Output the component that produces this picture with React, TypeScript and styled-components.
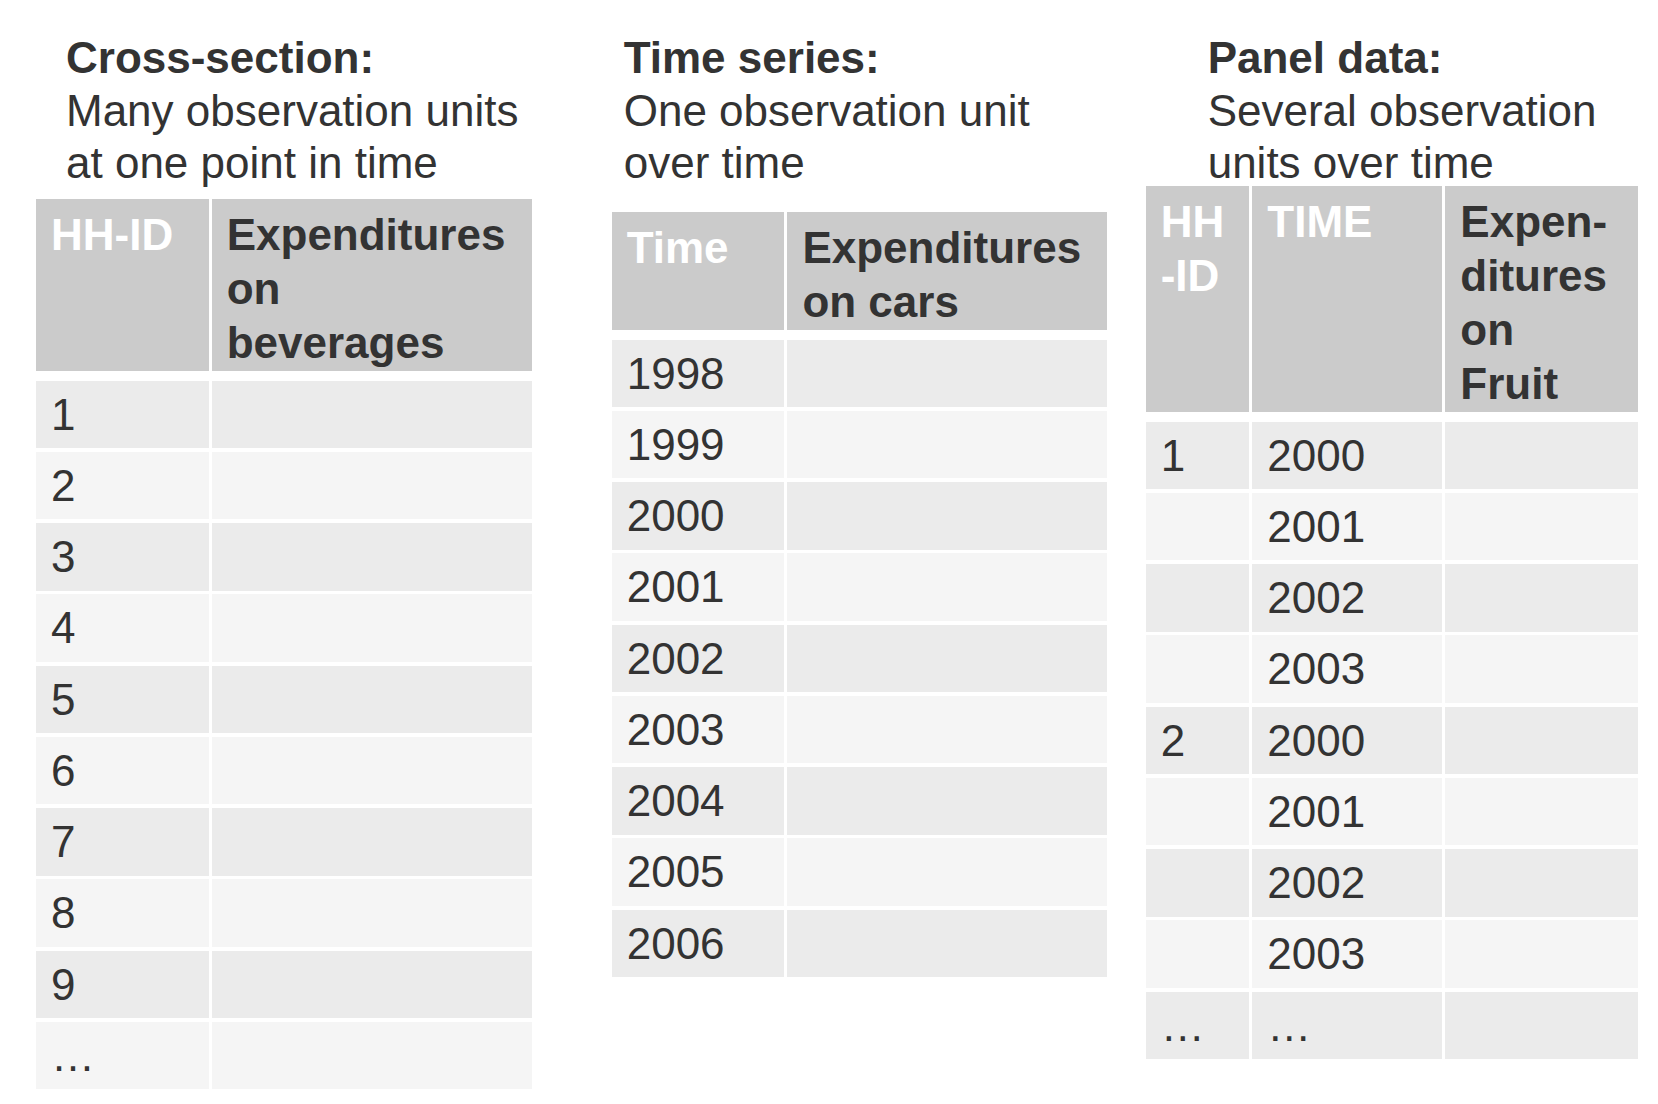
import styled, { createGlobalStyle } from "styled-components";

const GlobalStyle = createGlobalStyle`
  html, body {
    margin: 0;
    padding: 0;
    background: #ffffff;
  }

  body {
    font-family: "Liberation Sans", Arial, Helvetica, sans-serif;
    color: #333333;
  }
`;

const Page = styled.main`
  display: flex;
  align-items: flex-start;
  width: 1658px;
  min-height: 1104px;
  padding-top: 32px;
  box-sizing: border-box;
`;

const Column = styled.section<{ $offset: number }>`
  display: flex;
  flex-direction: column;
  margin-left: ${(p) => p.$offset}px;
`;

const Title = styled.h2<{ $indent: number }>`
  margin: 0;
  padding-left: ${(p) => p.$indent}px;
  font-size: 44px;
  line-height: 52.5px;
  font-weight: 400;
  color: #333333;
  white-space: nowrap;
`;

const TitleLead = styled.strong`
  font-weight: 700;
`;

const Table = styled.div<{ $gap: number }>`
  display: flex;
  flex-direction: column;
  gap: 3.75px;
  margin-top: ${(p) => p.$gap}px;
`;

const Row = styled.div<{ $cols: string }>`
  display: grid;
  grid-template-columns: ${(p) => p.$cols};
  column-gap: 3px;
`;

const HeaderRow = styled(Row)`
  margin-bottom: 6.25px;
`;

const HeaderCell = styled.div<{ $light?: boolean }>`
  background: #cbcbcb;
  padding: 9px 6px 1px 15px;
  font-size: 44px;
  line-height: 54px;
  font-weight: 700;
  color: ${(p) => (p.$light ? "#ffffff" : "#333333")};
  white-space: nowrap;
`;

const Cell = styled.div<{ $shade: boolean }>`
  height: 67.5px;
  padding-left: 15px;
  background: ${(p) => (p.$shade ? "#ebebeb" : "#f5f5f5")};
  font-size: 44px;
  line-height: 67.5px;
  color: #333333;
  white-space: nowrap;
`;

type Header = { lines: string[]; light?: boolean };

type Panel = {
  lead: string;
  lines: string[];
  offset: number;
  indent: number;
  gap: number;
  cols: string;
  headers: Header[];
  rows: string[][];
};

const years = ["2000", "2001", "2002", "2003"];

const panels: Panel[] = [
  {
    lead: "Cross-section:",
    lines: ["Many observation units", "at one point in time"],
    offset: 36,
    indent: 30,
    gap: 9,
    cols: "172.7px 320px",
    headers: [
      { lines: ["HH-ID"], light: true },
      { lines: ["Expenditures", "on", "beverages"] },
    ],
    rows: ["1", "2", "3", "4", "5", "6", "7", "8", "9", "…"].map((id) => [id, ""]),
  },
  {
    lead: "Time series:",
    lines: ["One observation unit", "over time"],
    offset: 80,
    indent: 12,
    gap: 22,
    cols: "172.7px 320px",
    headers: [
      { lines: ["Time"], light: true },
      { lines: ["Expenditures", "on cars"] },
    ],
    rows: ["1998", "1999", "2000", "2001", "2002", "2003", "2004", "2005", "2006"].map(
      (y) => [y, ""]
    ),
  },
  {
    lead: "Panel data:",
    lines: ["Several observation", "units over time"],
    offset: 38.3,
    indent: 62,
    gap: -4,
    cols: "103.7px 190px 193px",
    headers: [
      { lines: ["HH", "-ID"], light: true },
      { lines: ["TIME"], light: true },
      { lines: ["Expen-", "ditures", "on", "Fruit"] },
    ],
    rows: [
      ...years.map((y, i) => [i === 0 ? "1" : "", y, ""]),
      ...years.map((y, i) => [i === 0 ? "2" : "", y, ""]),
      ["…", "…", ""],
    ],
  },
];

const Lines = ({ lines }: { lines: string[] }) => (
  <>
    {lines.map((line, i) => (
      <span key={i}>
        {i > 0 && <br />}
        {line}
      </span>
    ))}
  </>
);

export default function App() {
  return (
    <>
      <GlobalStyle />
      <Page>
        {panels.map((panel) => (
          <Column key={panel.lead} $offset={panel.offset}>
            <Title $indent={panel.indent}>
              <TitleLead>{panel.lead}</TitleLead>
              <br />
              <Lines lines={panel.lines} />
            </Title>
            <Table $gap={panel.gap}>
              <HeaderRow $cols={panel.cols}>
                {panel.headers.map((h, i) => (
                  <HeaderCell key={i} $light={h.light}>
                    <Lines lines={h.lines} />
                  </HeaderCell>
                ))}
              </HeaderRow>
              {panel.rows.map((row, r) => (
                <Row key={r} $cols={panel.cols}>
                  {row.map((value, c) => (
                    <Cell key={c} $shade={r % 2 === 0}>
                      {value}
                    </Cell>
                  ))}
                </Row>
              ))}
            </Table>
          </Column>
        ))}
      </Page>
    </>
  );
}
